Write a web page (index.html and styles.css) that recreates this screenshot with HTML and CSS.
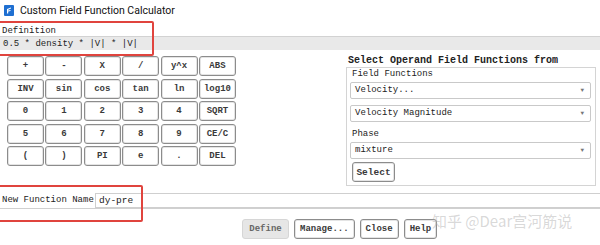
FILE: index.html
```html
<!DOCTYPE html>
<html lang="en">
<head>
  <meta charset="UTF-8" />
  <title>Custom Field Function Calculator</title>
  <link rel="stylesheet" href="styles.css">
</head>
<body>
  <div class="window">
    <!-- Title bar -->
    <div class="titlebar">
      <svg class="app-icon" width="10" height="11" viewBox="0 0 10 11">
        <rect x="0" y="0" width="10" height="11" rx="1" fill="#1f6fd1"/>
        <path d="M3 8.5 L3 4 L7 2.5 L7 3.6 L4.2 4.7 L4.2 5.6 L6.5 5 L6.5 6 L4.2 6.6 L4.2 8.5 Z" fill="#fff"/>
      </svg>
      <span class="title">Custom Field Function Calculator</span>
    </div>

    <!-- Definition -->
    <div class="def-label">Definition</div>
    <div class="def-field">0.5 * density * |V| * |V|</div>

    <div class="main">
      <!-- Keypad -->
      <div class="keypad">
        <button class="key">+</button>
        <button class="key">-</button>
        <button class="key">X</button>
        <button class="key">/</button>
        <button class="key">y^x</button>
        <button class="key">ABS</button>
        <button class="key">INV</button>
        <button class="key">sin</button>
        <button class="key">cos</button>
        <button class="key">tan</button>
        <button class="key">ln</button>
        <button class="key">log10</button>
        <button class="key">0</button>
        <button class="key">1</button>
        <button class="key">2</button>
        <button class="key">3</button>
        <button class="key">4</button>
        <button class="key">SQRT</button>
        <button class="key">5</button>
        <button class="key">6</button>
        <button class="key">7</button>
        <button class="key">8</button>
        <button class="key">9</button>
        <button class="key">CE/C</button>
        <button class="key">(</button>
        <button class="key">)</button>
        <button class="key">PI</button>
        <button class="key">e</button>
        <button class="key">.</button>
        <button class="key">DEL</button>
      </div>

      <!-- Operand selection -->
      <div class="operand">
        <div class="operand-title">Select Operand Field Functions from</div>
        <div class="group">
          <div class="label">Field Functions</div>
          <div class="dropdown">Velocity...<span class="arrow">&#9660;</span></div>
          <div class="dropdown">Velocity Magnitude<span class="arrow">&#9660;</span></div>
          <div class="label">Phase</div>
          <div class="dropdown">mixture<span class="arrow">&#9660;</span></div>
          <button class="btn select-btn">Select</button>
        </div>
      </div>
    </div>

    <!-- New function name -->
    <div class="name-row">
      <span class="name-label">New Function Name</span>
      <div class="name-field">dy-pre</div>
    </div>

    <!-- Actions -->
    <div class="actions">
      <button class="btn disabled">Define</button>
      <button class="btn">Manage...</button>
      <button class="btn">Close</button>
      <button class="btn">Help</button>
    </div>

    <div class="watermark">知乎 @Dear宫河筋说</div>

    <!-- annotation boxes -->
    <div class="mark mark-def"></div>
    <div class="mark mark-name"></div>
  </div>
</body>
</html>
```

FILE: styles.css
```css
/* General */
body {
  margin: 0;
  padding: 0;
  background-color: #fff;
  font-family: "Liberation Mono", monospace;
  font-size: 9px;
  color: #222;
}

.window {
  position: relative;
  width: 600px;
  height: 245px;
  overflow: hidden;
  background-color: #fff;
}

/* Title bar */
.titlebar {
  height: 20px;
  display: flex;
  align-items: center;
  padding-left: 4px;
  gap: 6px;
}

.title {
  font-family: Roboto, sans-serif;
  font-size: 10.5px;
  color: #111;
}

/* Definition */
.def-label {
  padding: 7px 0 0 2px;
  height: 9px;
  line-height: 9px;
}

.def-field {
  height: 13px;
  line-height: 14px;
  padding-left: 3px;
  background-color: #e9e9e9;
  border-top: 1px solid #d2d2d2;
  font-size: 9px;
}

.main {
  display: flex;
  padding: 6px 4px 0 7px;
  height: 129px;
}

/* Keypad */
.keypad {
  display: grid;
  grid-template-columns: repeat(6, 37px);
  grid-auto-rows: 20px;
  column-gap: 1.4px;
  row-gap: 2.5px;
}

.key,
.btn {
  font-family: "Liberation Mono", monospace;
  font-size: 9px;
  font-weight: bold;
  color: #3a3a3a;
  background-color: #fff;
  border: 1px solid #8c8c8c;
  border-radius: 3px;
  box-shadow: inset 0 0 0 1px #e4e4e4;
  padding: 0;
  margin: 0;
}

/* Operand panel */
.operand {
  margin-left: auto;
  width: 250px;
}

.operand-title {
  font-weight: bold;
  font-size: 10px;
  height: 10px;
  line-height: 10px;
  padding-left: 2px;
}

.group {
  margin-top: 1px;
  border: 1px solid #d4d4d4;
  height: 117px;
  padding: 0 4px 0 3px;
}

.label {
  height: 13px;
  line-height: 13px;
  padding-left: 2px;
}

.dropdown {
  position: relative;
  height: 15px;
  line-height: 15px;
  border: 1px solid #c9c9c9;
  border-radius: 2px;
  padding-left: 4px;
  margin-bottom: 6px;
}

.dropdown .arrow {
  position: absolute;
  right: 6px;
  top: 0;
  font-size: 6px;
  color: #777;
}

.label + .dropdown {
  margin-top: 1px;
}

.select-btn {
  width: 43px;
  height: 20px;
  margin-left: 2px;
  margin-top: -3px;
  font-size: 9.5px;
}

/* New function name */
.name-row {
  display: flex;
  align-items: center;
  margin-top: 8px;
  height: 14px;
}

.name-label {
  padding-left: 2px;
  width: 93px;
}

.name-field {
  flex: 1;
  height: 13px;
  line-height: 13px;
  padding-left: 3px;
  border-top: 1px solid #cfcfcf;
  border-left: 1px solid #cfcfcf;
  border-bottom: 1px solid #cfcfcf;
  font-size: 9.5px;
}

/* Actions */
.actions {
  border-top: 1px solid #d0d0d0;
  margin-top: 1px;
  display: flex;
  gap: 5px;
  padding: 10px 0 0 242px;
}

.actions .btn {
  height: 20px;
  padding: 0 5px;
}

.actions .btn.disabled {
  background-color: #e6e6e6;
  border-color: #d6d6d6;
  box-shadow: none;
  color: #666;
  width: 47px;
}

.watermark {
  position: absolute;
  left: 432px;
  top: 210px;
  font-family: "Noto Sans CJK SC", sans-serif;
  font-size: 15px;
  color: rgba(170, 170, 170, 0.45);
  white-space: nowrap;
}

/* Annotation boxes */
.mark {
  position: absolute;
  border: 2px solid #e0443e;
  border-radius: 2px;
}

.mark-def {
  left: -2px;
  top: 21px;
  width: 152px;
  height: 31px;
}

.mark-name {
  left: -2px;
  top: 185px;
  width: 141px;
  height: 33px;
}
```
